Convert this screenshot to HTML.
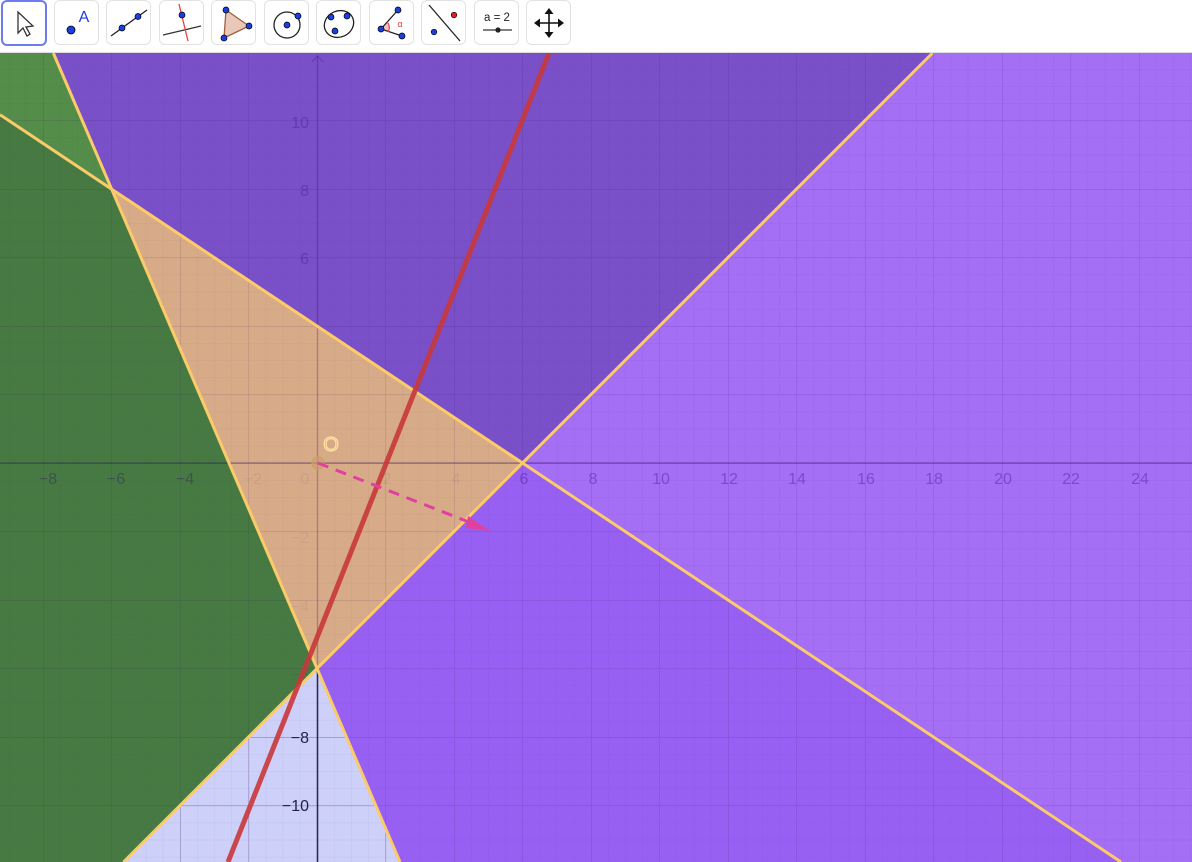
<!DOCTYPE html>
<html><head><meta charset="utf-8"><style>
html,body{margin:0;padding:0;width:1192px;height:862px;overflow:hidden;background:#fff;font-family:"Liberation Sans",sans-serif}
#tb{position:absolute;left:0;top:0;width:1192px;height:52px;background:#fff;border-bottom:1px solid #ddd;z-index:2}
.b{position:absolute;top:0;width:43px;height:43px;border:1px solid #e2e2e2;border-radius:6px;background:#fff;box-sizing:content-box}
.b svg{position:absolute;left:0;top:0}
.sel{border:2px solid #6a7cf0;width:42px;height:42px;top:0}
#g{position:absolute;left:0;top:0;overflow:hidden}
</style></head><body>
<svg id="g" width="1192" height="862" viewBox="0 0 1192 862">
<defs>
<pattern id="minor" x="43" y="52" width="17.125" height="17.125" patternUnits="userSpaceOnUse">
<path d="M0 0H17.125M0 0V17.125" stroke="rgba(40,10,90,0.07)" stroke-width="1" fill="none"/>
</pattern>
<pattern id="major" x="43" y="52" width="68.5" height="68.5" patternUnits="userSpaceOnUse">
<path d="M0 0H68.5M0 0V68.5" stroke="rgba(40,10,90,0.14)" stroke-width="1.2" fill="none"/>
</pattern>
<clipPath id="lav"><polygon points="317,668.5 400,862 123.5,862"/></clipPath>
</defs>
<polygon points="0,53 53.3,53 317,668.5 123.5,862 0,862" fill="#477a43"/>
<polygon points="0,53 53.3,53 111.5,189 0,114.7" fill="#548c4a"/>
<polygon points="317,668.5 400,862 123.5,862" fill="#cdd0f8"/>
<polygon points="111.5,189 522.5,463 317,668.5" fill="#d8ab88"/>
<polygon points="53.3,53 932.5,53 522.5,463 111.5,189" fill="#7a50c8"/>
<polygon points="932.5,53 1192,53 1192,862 1121,862 522.5,463" fill="#a46ef5"/>
<polygon points="522.5,463 1121,862 400,862 317,668.5" fill="#9860f2"/>
<rect x="0" y="53" width="1192" height="809" fill="url(#minor)"/>
<rect x="0" y="53" width="1192" height="809" fill="url(#major)"/>
<line x1="0" y1="463" x2="1192" y2="463" stroke="rgba(40,10,90,0.35)" stroke-width="1.5"/>
<line x1="317.5" y1="56" x2="317.5" y2="862" stroke="rgba(40,10,90,0.2)" stroke-width="1.5"/>
<path d="M312 62 L317.5 56 L323 62" stroke="rgba(40,10,90,0.25)" stroke-width="1.2" fill="none"/>
<g clip-path="url(#lav)"><line x1="317.5" y1="600" x2="317.5" y2="862" stroke="#2a2a50" stroke-width="1.5"/>
<rect x="0" y="53" width="1192" height="809" fill="url(#major)"/><rect x="0" y="53" width="1192" height="809" fill="url(#major)"/></g>
<g font-family="Liberation Sans, sans-serif" font-size="16" fill="rgba(40,0,110,0.32)" text-anchor="middle">
<text x="48" y="484">−8</text><text x="116" y="484">−6</text><text x="185" y="484">−4</text>
<text x="524" y="484">6</text><text x="593" y="484">8</text><text x="661" y="484">10</text>
<text x="729" y="484">12</text><text x="797" y="484">14</text><text x="866" y="484">16</text><text x="934" y="484">18</text>
<text x="1003" y="484">20</text><text x="1071" y="484">22</text><text x="1140" y="484">24</text>
</g>
<g font-family="Liberation Sans, sans-serif" font-size="16" fill="rgba(40,0,110,0.07)" text-anchor="middle">
<text x="253" y="484">−2</text><text x="305" y="484">0</text><text x="387" y="484">2</text><text x="456" y="484">4</text>
</g>
<g font-family="Liberation Sans, sans-serif" font-size="16" fill="rgba(40,0,110,0.28)" text-anchor="end">
<text x="309" y="128">10</text><text x="309" y="196">8</text><text x="309" y="264">6</text>
</g>
<g font-family="Liberation Sans, sans-serif" font-size="16" fill="rgba(40,0,110,0.06)" text-anchor="end">
<text x="309" y="543">−2</text><text x="309" y="612">−4</text><text x="309" y="680">−6</text>
</g>
<g font-family="Liberation Sans, sans-serif" font-size="16" fill="#222248" text-anchor="end">
<text x="309" y="743">−8</text><text x="309" y="811">−10</text>
</g>
<g stroke="#fbcb6a" stroke-width="3">
<line x1="932.5" y1="53" x2="123.5" y2="862"/>
<line x1="0" y1="114.7" x2="1121" y2="862"/>
<line x1="53.3" y1="53" x2="400" y2="862"/>
</g>
<line x1="549" y1="53" x2="228" y2="862" stroke="#c8383a" stroke-width="5" opacity="0.9"/>
<circle cx="318" cy="463" r="6" fill="rgba(200,160,110,0.6)" stroke="#c8a060" stroke-width="1.2"/>
<text x="331" y="451" font-family="Liberation Sans, sans-serif" font-size="20" fill="none" stroke="#fde0a0" stroke-width="1.3" text-anchor="middle">O</text>
<line x1="318" y1="463" x2="474" y2="524" stroke="#e040a0" stroke-width="3" stroke-dasharray="11,8"/>
<polygon points="490,531 468,516 466,528" fill="#e040a0"/>
</svg>

<div id="tb">
<div class="b sel" style="left:1px"><svg width="42" height="42"><path d="M15 10 L15 31 L20 26 L24 34 L27 32 L23 25 L30 24 Z" fill="#fff" stroke="#333" stroke-width="1.3"/></svg></div>
<div class="b" style="left:53.5px"><svg width="43" height="43"><circle cx="16" cy="29" r="4" fill="#1a3fe0" stroke="#000" stroke-width=".8"/><text x="29" y="21" font-family="Liberation Sans,sans-serif" font-size="16" fill="#1a3fe0" text-anchor="middle">A</text></svg></div>
<div class="b" style="left:106px"><svg width="43" height="43"><line x1="4" y1="35" x2="40" y2="9" stroke="#222" stroke-width="1.3"/><circle cx="15" cy="27" r="3" fill="#1a3fe0" stroke="#000" stroke-width=".7"/><circle cx="31" cy="15.5" r="3" fill="#1a3fe0" stroke="#000" stroke-width=".7"/></svg></div>
<div class="b" style="left:158.5px"><svg width="43" height="43"><line x1="3" y1="34" x2="41" y2="25" stroke="#333" stroke-width="1.3"/><line x1="19" y1="3" x2="28" y2="40" stroke="#e84040" stroke-width="1.3"/><circle cx="22" cy="14" r="3" fill="#1a3fe0" stroke="#000" stroke-width=".7"/></svg></div>
<div class="b" style="left:211px"><svg width="43" height="43"><polygon points="14,9 37,25 12,37" fill="#e8c8b8" stroke="#a0603a" stroke-width="1.3"/><circle cx="14" cy="9" r="3" fill="#1a3fe0" stroke="#000" stroke-width=".7"/><circle cx="37" cy="25" r="3" fill="#1a3fe0" stroke="#000" stroke-width=".7"/><circle cx="12" cy="37" r="3" fill="#1a3fe0" stroke="#000" stroke-width=".7"/></svg></div>
<div class="b" style="left:263.5px"><svg width="43" height="43"><circle cx="22" cy="24" r="13" fill="none" stroke="#222" stroke-width="1.3"/><circle cx="22" cy="24" r="3" fill="#1a3fe0" stroke="#000" stroke-width=".7"/><circle cx="33" cy="15" r="3" fill="#1a3fe0" stroke="#000" stroke-width=".7"/></svg></div>
<div class="b" style="left:316px"><svg width="43" height="43"><ellipse cx="22" cy="23" rx="15" ry="13" transform="rotate(-25 22 23)" fill="none" stroke="#222" stroke-width="1.3"/><circle cx="14" cy="16" r="3" fill="#1a3fe0" stroke="#000" stroke-width=".7"/><circle cx="30" cy="15" r="3" fill="#1a3fe0" stroke="#000" stroke-width=".7"/><circle cx="18" cy="30" r="3" fill="#1a3fe0" stroke="#000" stroke-width=".7"/></svg></div>
<div class="b" style="left:368.5px"><svg width="43" height="43"><path d="M11 28 L18 31 A8 8 0 0 0 17 21 Z" fill="#f4c4c4"/><line x1="11" y1="28" x2="28" y2="9" stroke="#222" stroke-width="1.3"/><line x1="11" y1="28" x2="32" y2="35" stroke="#222" stroke-width="1.3"/><path d="M17 21 A8 8 0 0 1 18 31" fill="none" stroke="#e84040" stroke-width="1.2"/><text x="30" y="26" font-family="Liberation Sans,sans-serif" font-size="9" fill="#e84040" text-anchor="middle">α</text><circle cx="11" cy="28" r="3" fill="#1a3fe0" stroke="#000" stroke-width=".7"/><circle cx="28" cy="9" r="3" fill="#1a3fe0" stroke="#000" stroke-width=".7"/><circle cx="32" cy="35" r="3" fill="#1a3fe0" stroke="#000" stroke-width=".7"/></svg></div>
<div class="b" style="left:421px"><svg width="43" height="43"><line x1="7" y1="4" x2="38" y2="40" stroke="#222" stroke-width="1.3"/><circle cx="32" cy="14" r="2.8" fill="#e02020" stroke="#000" stroke-width=".6"/><circle cx="12" cy="31" r="2.8" fill="#1a3fe0" stroke="#000" stroke-width=".6"/></svg></div>
<div class="b" style="left:473.5px"><svg width="43" height="43"><text x="22" y="20" font-family="Liberation Sans,sans-serif" font-size="11.5" fill="#222" text-anchor="middle">a = 2</text><line x1="8" y1="29" x2="37" y2="29" stroke="#333" stroke-width="1.3"/><circle cx="23" cy="29" r="2.6" fill="#222"/></svg></div>
<div class="b" style="left:526px"><svg width="43" height="43"><g fill="#111" stroke="#111" stroke-width="1.6"><line x1="22" y1="10" x2="22" y2="34"/><line x1="10" y1="22" x2="34" y2="22"/></g><g fill="#111"><polygon points="22,7 17.5,13 26.5,13"/><polygon points="22,37 17.5,31 26.5,31"/><polygon points="7,22 13,17.5 13,26.5"/><polygon points="37,22 31,17.5 31,26.5"/></g></svg></div>
</div>
</body></html>
